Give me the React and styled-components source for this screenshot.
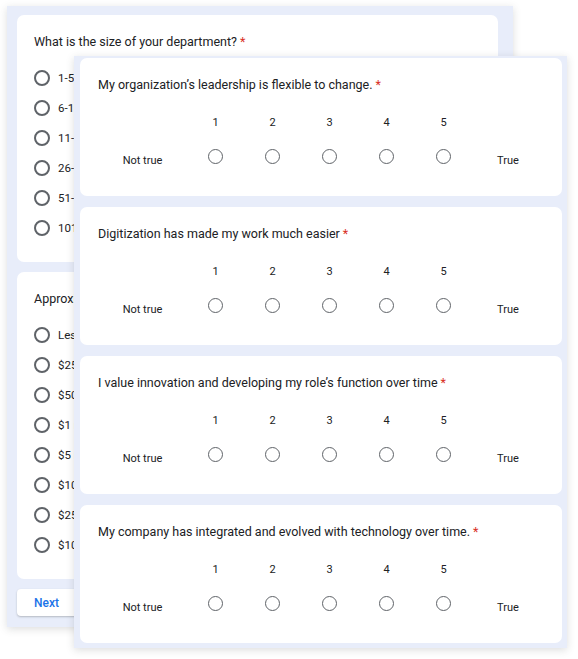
import React from 'react'
import styled, { createGlobalStyle } from 'styled-components'

const GlobalStyle = createGlobalStyle`
    html, body {
        margin: 0;
        padding: 0;
        background: #ffffff;
        font-family: Roboto, "Noto Sans", Arial, sans-serif;
        color: #202124;
    }
`

const Stage = styled.div`
    position: relative;
    width: 578px;
    height: 659px;
    overflow: hidden;
`

const Panel = styled.div`
    position: ${p => (p.front ? 'absolute' : 'relative')};
    top: ${p => (p.front ? '56px' : 'auto')};
    left: ${p => (p.front ? '74px' : 'auto')};
    margin: ${p => (p.front ? '0' : '6px 0 0 7px')};
    width: ${p => (p.front ? '493px' : '506px')};
    height: ${p => (p.front ? '592px' : '621px')};
    box-sizing: border-box;
    padding: ${p => (p.front ? '2px 5px 5px 6px' : '9px 15px 10px 10px')};
    background: #e8edfa;
    box-shadow: 0 2px 8px rgba(60, 64, 67, 0.18);
    display: flex;
    flex-direction: column;
    gap: ${p => (p.front ? '11px' : '10px')};
`

const Card = styled.div`
    background: #ffffff;
    border-radius: 7px;
    box-sizing: border-box;
`

const ChoiceCard = styled(Card)`
    padding: 18px 17px 19px;
`

const ScaleCard = styled(Card)`
    height: 138px;
    padding: 18px 18px 0;
`

const Question = styled.div`
    font-size: 12.5px;
    line-height: 18px;
    color: #202124;
`

const Star = styled.span`
    color: #d93025;
    margin-left: 3px;
`

const Options = styled.div`
    margin-top: 12px;
    display: flex;
    flex-direction: column;
`

const Option = styled.label`
    height: 30px;
    display: flex;
    align-items: center;
    gap: 8px;
    font-size: 11.5px;
    color: #202124;
    white-space: nowrap;
`

const Radio = styled.span`
    flex: none;
    display: inline-block;
    width: ${p => p.size}px;
    height: ${p => p.size}px;
    box-sizing: border-box;
    border: ${p => p.stroke}px solid #5f6368;
    border-radius: 50%;
`

const Scale = styled.div`
    margin-top: 20px;
    display: grid;
    grid-template-columns: 89px repeat(5, 57px) 1fr;
    grid-template-rows: 16px 36px;
    row-gap: 8px;
    font-size: 11px;
    color: #202124;
`

const Num = styled.div`
    display: flex;
    align-items: center;
    justify-content: center;
`

const Cell = styled.div`
    display: flex;
    align-items: center;
    justify-content: center;
`

const End = styled.div`
    display: flex;
    align-items: center;
    justify-content: center;
    padding-top: 8px;
`

const NextCard = styled(Card)`
    width: 110px;
    height: 27px;
    border-radius: 4px;
    box-shadow: 0 1px 2px rgba(60, 64, 67, 0.3);
    display: flex;
    align-items: center;
    padding-left: 17px;
    font-size: 12px;
    font-weight: 500;
    color: #1a73e8;
`

const sizes = ['1-5', '6-10', '11-25', '26-50', '51-100', '101+']

const budgets = [
    'Less than $250,000',
    '$250,000 - $500,000',
    '$500,000 - $1 million',
    '$1 million - $5 million',
    '$5 million - $10 million',
    '$10 million - $25 million',
    '$25 million - $100 million',
    '$100 million +',
]

const statements = [
    'My organization\u2019s leadership is flexible to change.',
    'Digitization has made my work much easier',
    'I value innovation and developing my role\u2019s function over time',
    'My company has integrated and evolved with technology over time.',
]

const ChoiceQuestion = ({ title, items }) => (
    <ChoiceCard>
        <Question>{title}<Star>*</Star></Question>
        <Options>
            {items.map(item => (
                <Option key={item}>
                    <Radio size={16} stroke={2} />
                    {item}
                </Option>
            ))}
        </Options>
    </ChoiceCard>
)

const ScaleQuestion = ({ title }) => (
    <ScaleCard>
        <Question>{title}<Star>*</Star></Question>
        <Scale>
            <div />
            {[1, 2, 3, 4, 5].map(n => <Num key={n}>{n}</Num>)}
            <div />
            <End>Not true</End>
            {[1, 2, 3, 4, 5].map(n => (
                <Cell key={n}><Radio size={15} stroke={1.7} /></Cell>
            ))}
            <End>True</End>
        </Scale>
    </ScaleCard>
)

const App = () => {
    return (
        <Stage>
            <GlobalStyle />

            <Panel>
                <ChoiceQuestion title="What is the size of your department?" items={sizes} />
                <ChoiceQuestion title="Approximately what is your annual budget?" items={budgets} />
                <NextCard>Next</NextCard>
            </Panel>

            <Panel front>
                {statements.map(s => <ScaleQuestion key={s} title={s} />)}
            </Panel>
        </Stage>
    )
}

export default App
